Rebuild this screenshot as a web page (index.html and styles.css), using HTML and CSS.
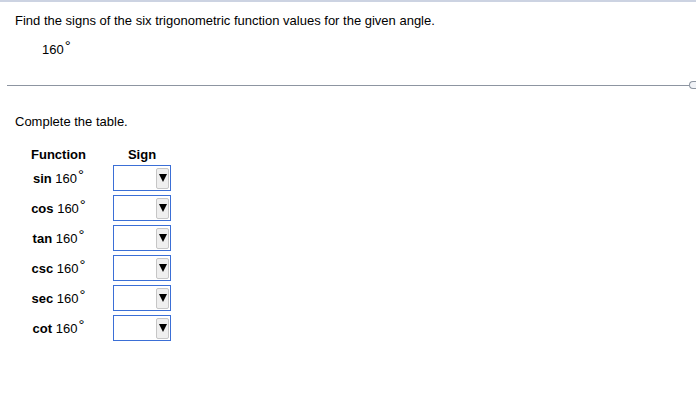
FILE: index.html
```html
<!DOCTYPE html>
<html>
<head>
<meta charset="utf-8">
<link rel="stylesheet" href="styles.css">
</head>
<body>
<div class="page">
  <div class="question">
    <p class="prompt">Find the signs of the six trigonometric function values for the given angle.</p>
    <p class="angle">160<sup>°</sup></p>
  </div>
  <div class="divider"><span class="line"></span><span class="handle"></span></div>
  <div class="answer">
    <p class="instr">Complete the table.</p>
    <table class="signs">
      <thead>
        <tr><th class="fn">Function</th><th class="sg">Sign</th></tr>
      </thead>
      <tbody>
        <tr><td class="fn"><b>sin</b> 160<sup>°</sup></td><td class="sg"><span class="sel"><span class="btn"><svg viewBox="0 0 8 8" width="8" height="8"><path d="M0 0H8L4 8Z"/></svg></span></span></td></tr>
        <tr><td class="fn"><b>cos</b> 160<sup>°</sup></td><td class="sg"><span class="sel"><span class="btn"><svg viewBox="0 0 8 8" width="8" height="8"><path d="M0 0H8L4 8Z"/></svg></span></span></td></tr>
        <tr><td class="fn"><b>tan</b> 160<sup>°</sup></td><td class="sg"><span class="sel"><span class="btn"><svg viewBox="0 0 8 8" width="8" height="8"><path d="M0 0H8L4 8Z"/></svg></span></span></td></tr>
        <tr><td class="fn"><b>csc</b> 160<sup>°</sup></td><td class="sg"><span class="sel"><span class="btn"><svg viewBox="0 0 8 8" width="8" height="8"><path d="M0 0H8L4 8Z"/></svg></span></span></td></tr>
        <tr><td class="fn"><b>sec</b> 160<sup>°</sup></td><td class="sg"><span class="sel"><span class="btn"><svg viewBox="0 0 8 8" width="8" height="8"><path d="M0 0H8L4 8Z"/></svg></span></span></td></tr>
        <tr><td class="fn"><b>cot</b> 160<sup>°</sup></td><td class="sg"><span class="sel"><span class="btn"><svg viewBox="0 0 8 8" width="8" height="8"><path d="M0 0H8L4 8Z"/></svg></span></span></td></tr>
      </tbody>
    </table>
  </div>
</div>
</body>
</html>
```

FILE: styles.css
```css
html, body {
  margin: 0;
  padding: 0;
  background: #fff;
}
body {
  font-family: "Liberation Sans", Arial, sans-serif;
  font-size: 13px;
  color: #000;
}
.page {
  border-top: 2px solid #ccd3e2;
  width: 696px;
  height: 413px;
  overflow: hidden;
}
p { margin: 0; }
.question {
  padding: 11px 0 0 15px;
}
.prompt {
  line-height: 16px;
}
.angle {
  margin: 13px 0 0 27px;
  line-height: 16px;
}
sup {
  font-size: 15px;
  line-height: 0;
  vertical-align: 3px;
  margin-left: 1px;
}
.divider {
  display: flex;
  align-items: center;
  margin: 23px 0 0 7px;
  height: 8px;
}
.line {
  flex: 1;
  height: 1px;
  background: #8d95a1;
}
.handle {
  width: 10px;
  height: 6px;
  border: 1px solid #8d95a1;
  border-right: none;
  border-radius: 4px 0 0 4px;
  background: #f1f3f7;
  margin-right: -4px;
}
.answer {
  padding: 25px 0 0 15px;
}
.instr {
  line-height: 16px;
}
.signs {
  border-collapse: collapse;
  margin: 17px 0 0 9px;
}
.signs th {
  font-weight: bold;
  padding: 0;
  height: 16px;
  line-height: 16px;
  text-align: center;
}
.signs td {
  padding: 0;
  height: 30px;
  text-align: center;
  vertical-align: middle;
}
.signs th.fn, .signs td.fn { width: 69px; }
.signs th.sg { width: 78px; padding-left: 10px; }
.signs td.sg { padding-left: 10px; }
.signs td.fn {
  line-height: 16px;
  height: 28px;
  padding-top: 2px;
}
.sel {
  display: flex;
  justify-content: flex-end;
  align-items: center;
  box-sizing: border-box;
  width: 58px;
  height: 26px;
  border: 1px solid #3b6fd6;
  margin: 0 auto;
  padding-right: 1px;
  background: #fff;
}
.btn {
  box-sizing: border-box;
  width: 13px;
  height: 21px;
  background: #efefef;
  border: 1px solid #c6c6c6;
  border-radius: 2px;
  display: flex;
  align-items: center;
  justify-content: center;
}
.btn svg {
  display: block;
  fill: #000;
}
```
